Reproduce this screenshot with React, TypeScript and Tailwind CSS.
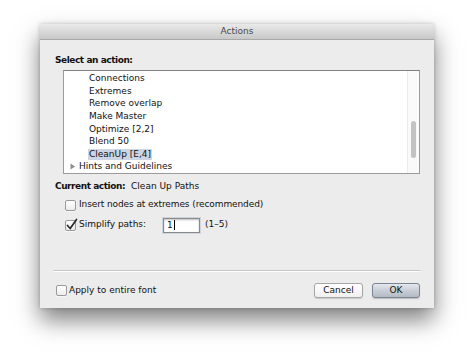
import React from "react";

const font = { fontFamily: '"DejaVu Sans", Verdana, sans-serif' };

function Check({ checked }: { checked?: boolean }) {
  return (
    <div className="relative w-[11px] h-[11px] rounded-[2px] border border-[#9a9a9a] bg-gradient-to-b from-white to-[#ececec] shadow-[0_1px_0_rgba(255,255,255,0.6)] shrink-0">
      {checked && (
        <svg className="absolute left-[0px] top-[-3px]" width="12" height="13" viewBox="0 0 12 13">
          <path d="M1.5 7.5 L4.2 10.5 L10.5 1.5" fill="none" stroke="#2a2a2a" strokeWidth="1.7" strokeLinecap="round" strokeLinejoin="round" />
        </svg>
      )}
    </div>
  );
}

const items = [
  "Connections",
  "Extremes",
  "Remove overlap",
  "Make Master",
  "Optimize [2,2]",
  "Blend 50",
];

export default function App() {
  return (
    <div className="w-[474px] h-[364px] bg-white overflow-hidden pt-[24px] pl-[40px] text-[#111]" style={font}>
      <div className="w-[394px] h-[284px] bg-[#ececec] flex flex-col shadow-[0_12px_22px_rgba(0,0,0,0.5),0_0_4px_rgba(0,0,0,0.2)]">
        {/* Title bar */}
        <div className="h-[16px] shrink-0 bg-gradient-to-b from-[#e9e9e9] via-[#d9d9d9] to-[#c8c8c8] border-b border-[#a8a8a8] flex items-center justify-center">
          <span className="text-[9px] leading-none text-[#4a4a4a]">Actions</span>
        </div>
        <div className="flex flex-col pl-[15px] pr-[14px]">
          <div className="mt-[14px] h-[12px] leading-[12px] text-[9px] font-bold tracking-[-0.45px]">Select an action:</div>
          {/* Listbox */}
          <div className="mt-[4px] ml-[8px] w-[357px] h-[104px] bg-white border border-[#9b9b9b] border-t-[#7f7f7f] flex">
            <div className="flex-1 flex flex-col pt-[1px]">
              {items.map((t) => (
                <div key={t} className="h-[12.7px] leading-[12.7px] text-[9px] pl-[25px]">
                  {t}
                </div>
              ))}
              <div className="h-[12.7px] flex items-center pl-[24px]">
                <span className="text-[9px] leading-[11px] px-[1px] bg-[#cbd5e3]">CleanUp [E,4]</span>
              </div>
              <div className="h-[12.7px] flex items-center pl-[6px]">
                <svg width="6" height="7" viewBox="0 0 6 7" className="mr-[3px]">
                  <path d="M0.5 0.5 L5 3.5 L0.5 6.5 Z" fill="#8c8c8c" />
                </svg>
                <span className="text-[9px] leading-[12.7px]">Hints and Guidelines</span>
              </div>
            </div>
            <div className="w-[12px] border-l border-[#ebebeb] bg-[#fafafa] flex flex-col items-center">
              <div className="mt-[50px] w-[5px] h-[37px] rounded-full bg-[#c3c3c3]" />
            </div>
          </div>
          {/* Current action */}
          <div className="mt-[6px] h-[12px] leading-[12px] text-[9px] flex">
            <span className="font-bold tracking-[-0.45px]">Current action:</span>
            <span className="ml-[6px]">Clean Up Paths</span>
          </div>
          <div className="mt-[7px] ml-[10px] h-[12px] flex items-center">
            <Check />
            <span className="ml-[3px] text-[9px] tracking-[-0.1px]">Insert nodes at extremes (recommended)</span>
          </div>
          <div className="mt-[6px] ml-[10px] h-[16px] flex items-center">
            <Check checked />
            <span className="ml-[3px] text-[9px] w-[84px]">Simplify paths:</span>
            <div className="w-[37px] h-[15px] bg-white border border-[#8a8a8a] shadow-[inset_0_1px_2px_rgba(0,0,0,0.25),0_0_0_1px_rgba(180,190,205,0.5)] flex items-center pl-[3px]">
              <span className="text-[9px] leading-none">1</span>
              <span className="w-[1px] h-[10px] bg-black ml-[1px]" />
            </div>
            <span className="ml-[5px] text-[9px]">(1–5)</span>
          </div>
        </div>
        {/* Separator */}
        <div className="mt-[37px] ml-[13px] mr-[14px] h-[1px] bg-[#c6c6c6] border-b border-white box-content" />
        {/* Bottom row */}
        <div className="mt-[11px] pl-[16px] pr-[14px] flex items-center">
          <Check />
          <span className="ml-[2px] text-[9px]">Apply to entire font</span>
          <div className="flex-1" />
          <button className="w-[49px] h-[15px] rounded-[3px] border border-[#a6a6a6] bg-gradient-to-b from-white to-[#f0f0f0] text-[9px] leading-none shadow-[0_1px_1px_rgba(0,0,0,0.15)]">
            Cancel
          </button>
          <button className="ml-[9px] w-[48px] h-[15px] rounded-[3px] border border-[#7c8594] bg-gradient-to-b from-[#e4e8ee] via-[#c9ced6] to-[#b4bac4] text-[9px] leading-none shadow-[0_1px_1px_rgba(0,0,0,0.2)]">
            OK
          </button>
        </div>
      </div>
    </div>
  );
}
